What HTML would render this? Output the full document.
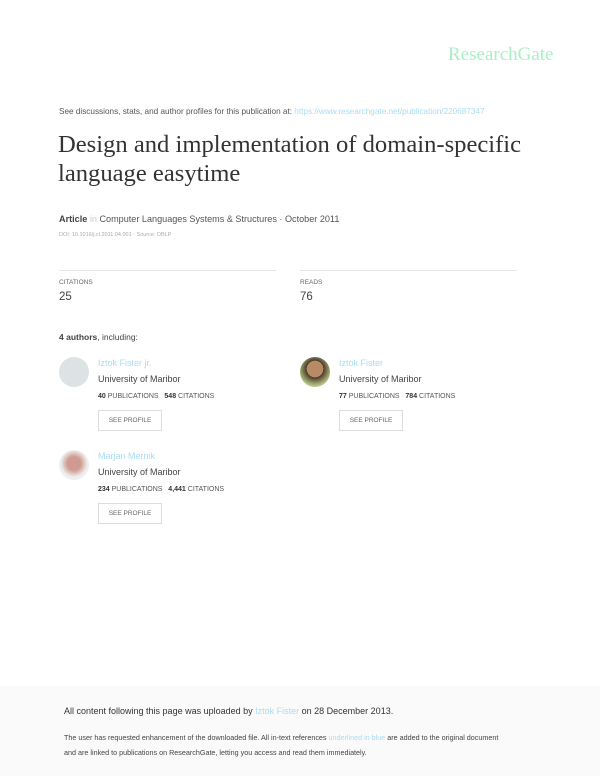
<!DOCTYPE html>
<html><head><meta charset="utf-8"><style>
body{margin:0;width:600px;height:776px;background:#fff;position:relative;font-family:"Liberation Sans",sans-serif;color:#333;overflow:hidden}
.a{position:absolute;white-space:nowrap}
.l{color:#a9dcf5}
.sm{font-size:7px;color:#555}
.btn{position:absolute;width:62px;height:19px;border:1px solid #ddd;font-size:6.5px;color:#666;text-align:center;line-height:19px}
.av{position:absolute;width:30px;height:30px;border-radius:50%}
</style></head><body>
<div class="a" style="left:448px;top:44px;font-family:'Liberation Serif',serif;font-size:19px;color:#a8f0c4">ResearchGate</div>
<div class="a" style="left:59px;top:107px;font-size:8.2px;color:#555">See discussions, stats, and author profiles for this publication at: <span class="l">https://www.researchgate.net/publication/220687347</span></div>
<div class="a" style="left:58px;top:130px;font-family:'Liberation Serif',serif;font-size:24.6px;line-height:29px;color:#333">Design and implementation of domain-specific<br>language easytime</div>
<div class="a" style="left:59px;top:214px;font-size:9.1px;color:#555"><b style="color:#444">Article</b> <span style="color:#ccc">in</span> Computer Languages Systems &amp; Structures · October 2011</div>
<div class="a" style="left:59px;top:232px;font-size:5.5px;color:#aaa">DOI: 10.1016/j.cl.2011.04.001 · Source: DBLP</div>
<div class="a" style="left:59px;top:270px;width:217px;border-top:1px solid #e6e6e6"></div>
<div class="a" style="left:300px;top:270px;width:217px;border-top:1px solid #e6e6e6"></div>
<div class="a" style="left:59px;top:279px;font-size:6.5px;color:#666">CITATIONS</div>
<div class="a" style="left:59px;top:291px;font-size:11.5px;color:#444">25</div>
<div class="a" style="left:300px;top:279px;font-size:6.5px;color:#666">READS</div>
<div class="a" style="left:300px;top:291px;font-size:11.5px;color:#444">76</div>
<div class="a" style="left:59px;top:332px;font-size:8.5px;color:#444"><b>4 authors</b>, including:</div>

<div class="av" style="left:59px;top:357px;background:#dde2e4"></div>
<div class="a l" style="left:98px;top:358px;font-size:9px">Iztok Fister jr.</div>
<div class="a" style="left:98px;top:374px;font-size:9px;color:#444">University of Maribor</div>
<div class="a sm" style="left:98px;top:393px"><b style="color:#333">40</b> PUBLICATIONS &nbsp; <b style="color:#333">548</b> CITATIONS</div>
<div class="btn" style="left:98px;top:410px">SEE PROFILE</div>

<div class="av" style="left:300px;top:357px;background:radial-gradient(circle at 50% 40%,#b88a66 35%,#4a3a2a 36%,#b0c080 70%,#dfe8d0)"></div>
<div class="a l" style="left:339px;top:358px;font-size:9px">Iztok Fister</div>
<div class="a" style="left:339px;top:374px;font-size:9px;color:#444">University of Maribor</div>
<div class="a sm" style="left:339px;top:393px"><b style="color:#333">77</b> PUBLICATIONS &nbsp; <b style="color:#333">784</b> CITATIONS</div>
<div class="btn" style="left:339px;top:410px">SEE PROFILE</div>

<div class="av" style="left:59px;top:450px;background:radial-gradient(circle at 50% 45%,#d09a90 30%,#eee 60%)"></div>
<div class="a l" style="left:98px;top:451px;font-size:9px">Marjan Mernik</div>
<div class="a" style="left:98px;top:467px;font-size:9px;color:#444">University of Maribor</div>
<div class="a sm" style="left:98px;top:486px"><b style="color:#333">234</b> PUBLICATIONS &nbsp; <b style="color:#333">4,441</b> CITATIONS</div>
<div class="btn" style="left:98px;top:503px">SEE PROFILE</div>

<div class="a" style="left:0;top:686px;width:600px;height:90px;background:#fafafa"></div>
<div class="a" style="left:64px;top:706px;font-size:9px;color:#333">All content following this page was uploaded by <span class="l">Iztok Fister</span> on 28 December 2013.</div>
<div class="a" style="left:64px;top:730px;font-size:7.2px;color:#444;line-height:15px">The user has requested enhancement of the downloaded file. All in-text references <span class="l">underlined in blue</span> are added to the original document<br>and are linked to publications on ResearchGate, letting you access and read them immediately.</div>
</body></html>
